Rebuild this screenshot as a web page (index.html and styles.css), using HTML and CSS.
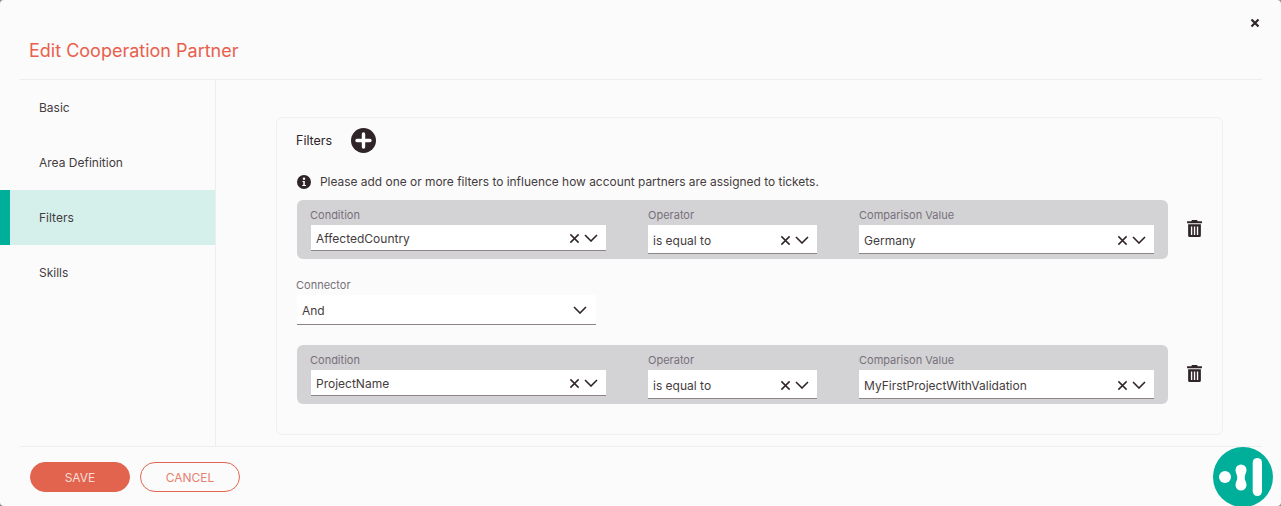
FILE: index.html
```html
<!DOCTYPE html>
<html lang="en">
<head>
<meta charset="utf-8">
<title>Edit Cooperation Partner</title>
<link rel="stylesheet" href="styles.css">
</head>
<body>
<svg class="defs" width="0" height="0" aria-hidden="true">
  <symbol id="clear" viewBox="0 0 12 12"><path d="M1.500 1.500l9 9M10.500 1.500l-9 9" fill="none" stroke="#2f2528" stroke-width="1.600"/></symbol>
  <symbol id="chev" viewBox="0 0 14 8"><path d="M1 1l6 6 6-6" fill="none" stroke="#2f2528" stroke-width="1.600"/></symbol>
  <symbol id="trash" viewBox="0 0 14 16"><path d="M4.600 0h4.800l.6 1.200H14v1.800H0V1.200h4zM1 4h12v10.500A1.500 1.500 0 0 1 11.500 16h-9A1.500 1.500 0 0 1 1 14.500zM3.600 6v8h1.300V6zm2.800 0v8h1.300V6zm2.800 0v8h1.300V6z" fill="#2f2528" fill-rule="evenodd"/></symbol>
</svg>
<div class="dialog">
  <header class="head">
    <h1 class="title">Edit Cooperation Partner</h1>
    <svg class="close" viewBox="0 0 10 10"><path d="M1.500 1.500l7 7M8.500 1.500l-7 7" fill="none" stroke="#2f2528" stroke-width="2.200"/></svg>
  </header>
  <div class="main">
    <nav class="side">
      <a class="tab">Basic</a>
      <a class="tab">Area Definition</a>
      <a class="tab active">Filters</a>
      <a class="tab">Skills</a>
    </nav>
    <section class="content">
      <div class="card">
        <div class="card-head">
          <span class="card-title">Filters</span>
          <svg class="add" viewBox="0 0 25 25"><circle cx="12.500" cy="12.500" r="12.500" fill="#2f2528"/><path d="M12.500 6v13M6 12.500h13" stroke="#fff" stroke-width="3.400" stroke-linecap="round"/></svg>
        </div>
        <p class="info">
          <svg class="info-icon" viewBox="0 0 14 14"><circle cx="7" cy="7" r="7" fill="#2f2528"/><circle cx="7" cy="3.800" r="1.200" fill="#fff"/><path d="M5.500 6h2.300v4H9v1H5.300v-1h1v-3h-.8z" fill="#fff"/></svg>
          Please add one or more filters to influence how account partners are assigned to tickets.
        </p>

        <div class="filter-wrap">
          <div class="filter">
            <div class="field f-cond">
              <label class="lab">Condition</label>
              <div class="sel short"><span class="val">AffectedCountry</span><svg class="x"><use href="#clear"/></svg><svg class="c"><use href="#chev"/></svg></div>
            </div>
            <div class="field f-op">
              <label class="lab">Operator</label>
              <div class="sel"><span class="val">is equal to</span><svg class="x"><use href="#clear"/></svg><svg class="c"><use href="#chev"/></svg></div>
            </div>
            <div class="field f-cmp">
              <label class="lab">Comparison Value</label>
              <div class="sel"><span class="val">Germany</span><svg class="x"><use href="#clear"/></svg><svg class="c"><use href="#chev"/></svg></div>
            </div>
          </div>
          <svg class="trash"><use href="#trash"/></svg>
        </div>

        <div class="connector">
          <label class="lab">Connector</label>
          <div class="sel tall"><span class="val">And</span><svg class="c"><use href="#chev"/></svg></div>
        </div>

        <div class="filter-wrap">
          <div class="filter">
            <div class="field f-cond">
              <label class="lab">Condition</label>
              <div class="sel short"><span class="val">ProjectName</span><svg class="x"><use href="#clear"/></svg><svg class="c"><use href="#chev"/></svg></div>
            </div>
            <div class="field f-op">
              <label class="lab">Operator</label>
              <div class="sel"><span class="val">is equal to</span><svg class="x"><use href="#clear"/></svg><svg class="c"><use href="#chev"/></svg></div>
            </div>
            <div class="field f-cmp">
              <label class="lab">Comparison Value</label>
              <div class="sel"><span class="val">MyFirstProjectWithValidation</span><svg class="x"><use href="#clear"/></svg><svg class="c"><use href="#chev"/></svg></div>
            </div>
          </div>
          <svg class="trash"><use href="#trash"/></svg>
        </div>
      </div>
    </section>
  </div>
  <footer class="foot">
    <button class="btn save">SAVE</button>
    <button class="btn cancel">CANCEL</button>
  </footer>
</div>
<svg class="logo" viewBox="0 0 60 60">
  <circle cx="30" cy="30" r="30" fill="#00af9a"/>
  <circle cx="12" cy="30" r="6" fill="#fff"/>
  <path d="M28 17.500a5.500 5.500 0 0 1 5.500 5.500c0 3-1.800 4.500-1.800 7.500s1.800 4.500 1.800 7.500a5.500 5.500 0 0 1-11 0c0-3 1.800-4.500 1.800-7.500s-1.800-4.500-1.800-7.500a5.500 5.500 0 0 1 5.500-5.500z" fill="#fff"/>
  <rect x="39.700" y="11" width="9.300" height="38" rx="4.650" fill="#fff"/>
</svg>
</body>
</html>
```
FILE: styles.css
```css
* { box-sizing: border-box; }
html, body { margin: 0; height: 100%; }
body {
  background: #8c8c8c;
  font-family: "Inter", "Noto Sans", sans-serif;
  color: #453c40;
  overflow: hidden;
  position: relative;
}
.defs { position: absolute; }
.dialog {
  width: 1281px;
  height: 506px;
  background: #fbfbfb;
  border-radius: 4px;
  display: flex;
  flex-direction: column;
  padding: 0 19px 0 20px;
}
.head {
  height: 80px;
  flex: none;
  border-bottom: 1px solid #eeeeee;
  position: relative;
  padding: 40px 0 0 9px;
}
.title {
  margin: 0;
  font-size: 18px;
  line-height: 22px;
  font-weight: 400;
  color: #e8604d;
}
.close {
  position: absolute;
  right: 2px;
  top: 18px;
  width: 10px;
  height: 10px;
}
.main {
  flex: 1;
  display: flex;
  margin-left: -20px;
  min-height: 0;
}
.side {
  width: 216px;
  flex: none;
  border-right: 1px solid #eeeeee;
}
.tab {
  display: flex;
  align-items: center;
  height: 55px;
  padding-left: 39px;
  font-size: 12px;
  color: #453c40;
}
.active {
  background: #d5efeb;
  border-left: 10px solid #00af9a;
  padding-left: 29px;
}
.content {
  flex: 1;
  padding: 37px 39px 11px 60px;
}
.card {
  height: 318px;
  border: 1px solid #f0f0f0;
  border-radius: 6px;
  padding: 10px 19px 0 19px;
}
.card-head {
  display: flex;
  align-items: center;
  height: 25px;
  gap: 30px;
  font-size: 12.500px;
  color: #2f2528;
}
.card-title { width: 25px; white-space: nowrap; }
.add { width: 25px; height: 25px; }
.info {
  margin: 19px 0 0;
  height: 19px;
  display: flex;
  align-items: center;
  gap: 9px;
  font-size: 11.930px;
  padding-left: 1px;
}
.info-icon { width: 14px; height: 14px; flex: none; }
.filter-wrap {
  display: flex;
  align-items: center;
  margin-left: 1px;
}
.info + .filter-wrap { margin-top: 9px; }
.filter {
  width: 871px;
  height: 59px;
  background: #d3d3d5;
  border-radius: 6px;
  display: flex;
  padding: 8px 14px 0 14px;
}
.field { display: flex; flex-direction: column; }
.f-cond { width: 295px; }
.f-op { width: 169px; margin-left: 42px; }
.f-cmp { width: 295px; margin-left: 42px; }
.lab {
  font-size: 11px;
  line-height: 14px;
  height: 17px;
  color: #77707a;
}
.f-cond .lab { margin-left: -1px; }
.sel {
  height: 29px;
  background: #fff;
  border-bottom: 1px solid #8d8488;
  display: flex;
  align-items: center;
  padding: 2px 8px 0 5px;
  font-size: 12px;
  color: #453c40;
}
.short { height: 26px; padding-top: 1px; }
.val { flex: 1; white-space: nowrap; }
.x { width: 11px; height: 11px; flex: none; margin-right: 4px; }
.c { width: 14px; height: 8px; flex: none; }
.trash { width: 15px; height: 17px; margin-left: 19px; flex: none; margin-top: -2px; }
.connector { margin-top: 19px; margin-bottom: 20px; width: 300px; }
.connector .lab { display: block; }
.connector .sel { margin-left: 1px; width: 299px; }
.tall { height: 30px; padding: 1px 9px 0 5px; }
.foot {
  height: 60px;
  flex: none;
  border-top: 1px solid #eeeeee;
  padding: 15px 0 0 10px;
  display: flex;
  gap: 10px;
  align-items: flex-start;
}
.btn {
  width: 100px;
  height: 30px;
  border-radius: 15px;
  font-family: inherit;
  font-size: 12px;
  padding: 0;
}
.save { background: #e2644f; border: 1px solid #e2644f; color: #f9dcd6; }
.cancel { background: transparent; border: 1px solid #e2644f; color: #e8806f; }
.logo {
  position: absolute;
  left: 1213px;
  top: 447px;
  width: 60px;
  height: 60px;
}
```
